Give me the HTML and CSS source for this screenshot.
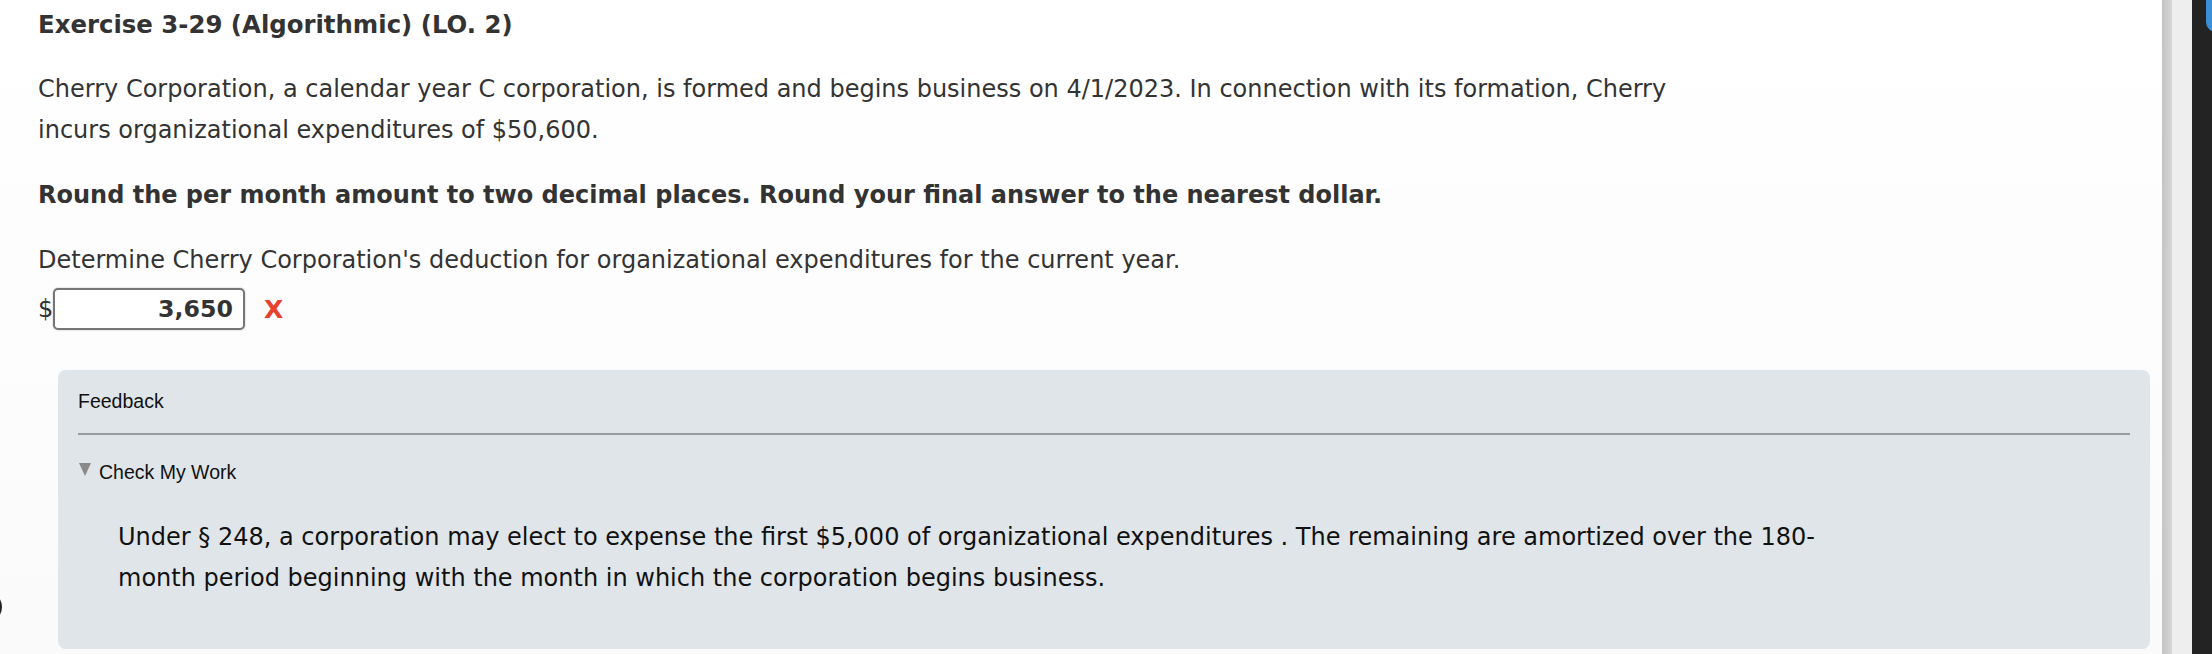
FILE: index.html
```html
<!DOCTYPE html>
<html lang="en">
<head>
<meta charset="utf-8">
<title>Exercise 3-29</title>
<link rel="stylesheet" href="styles.css">
</head>
<body>
<div class="frame">
  <main class="page">
    <h1 class="title">Exercise 3-29 (Algorithmic) (LO. 2)</h1>
    <p class="text intro">Cherry Corporation, a calendar year C corporation, is formed and begins business on 4/1/2023. In connection with its formation, Cherry incurs organizational expenditures of $50,600.</p>
    <p class="text strong">Round the per month amount to two decimal places. Round your final answer to the nearest dollar.</p>
    <p class="text ask">Determine Cherry Corporation's deduction for organizational expenditures for the current year.</p>
    <div class="answer">
      <span class="dollar">$</span>
      <span class="field">3,650</span>
      <span class="wrong">X</span>
    </div>
    <section class="feedback">
      <div class="fb-head">Feedback</div>
      <div class="fb-toggle"><span class="tri"></span>Check My Work</div>
      <p class="fb-text">Under § 248, a corporation may elect to expense the first $5,000 of organizational expenditures . The remaining are amortized over the 180-month period beginning with the month in which the corporation begins business.</p>
    </section>
    <div class="edge-mark"></div>
  </main>
  <div class="shade"></div>
  <div class="gutter"></div>
  <div class="dark"><span class="blue"></span></div>
</div>
</body>
</html>
```
FILE: styles.css
```css
html, body {
  margin: 0;
  padding: 0;
  height: 100%;
}
body {
  font-family: "DejaVu Sans", Verdana, sans-serif;
  color: #333;
  overflow: hidden;
}
.frame {
  display: flex;
  height: 654px;
}
.page {
  position: relative;
  flex: 1;
  background: linear-gradient(#ffffff, #fafafa);
  padding: 11px 0 0 38px;
  box-sizing: border-box;
  min-width: 0;
}
.title {
  margin: 0;
  font-size: 24.4px;
  line-height: 28px;
  font-weight: bold;
  color: #333;
}
.text {
  margin: 0;
  font-size: 24px;
  line-height: 41px;
  max-width: 1690px;
}
.intro { margin-top: 29.5px; }
.strong { font-weight: bold; margin-top: 24px; }
.ask { margin-top: 24px; }
.answer {
  display: flex;
  align-items: center;
  margin-top: 7.5px;
  height: 42px;
}
.dollar {
  font-size: 24px;
  width: 15px;
  overflow: visible;
}
.field {
  box-sizing: border-box;
  width: 192px;
  height: 42px;
  border: 2px solid #767676;
  border-radius: 5px;
  box-shadow: 0 0 2px rgba(0,0,0,0.25);
  background: #fff;
  text-align: right;
  padding-right: 10px;
  font-size: 23.7px;
  font-weight: bold;
  line-height: 38px;
  color: #333;
}
.wrong {
  margin-left: 19px;
  color: #e8412f;
  font-weight: bold;
  font-size: 25px;
  line-height: 1;
}
.feedback {
  margin: 40px 0 0 20px;
  width: 2092px;
  box-sizing: border-box;
  height: 279px;
  background: #dfe5e9;
  border-radius: 8px;
  padding: 19px 20px 0 20px;
  font-family: "Liberation Sans", Arial, sans-serif;
  color: #111;
}
.fb-head {
  font-size: 19.5px;
  line-height: 24px;
  padding-bottom: 20px;
  border-bottom: 2px solid #999c9f;
}
.fb-toggle {
  display: flex;
  align-items: center;
  margin-top: 25px;
  font-size: 19.5px;
  line-height: 24px;
}
.tri {
  width: 0;
  height: 0;
  border-left: 6px solid transparent;
  border-right: 6px solid transparent;
  border-top: 13px solid #8a8a8a;
  margin: -6px 8px 0 1px;
}
.fb-text {
  margin: 32.5px 0 0 40px;
  font-family: "DejaVu Sans", Verdana, sans-serif;
  font-size: 24px;
  line-height: 41px;
  max-width: 1760px;
  color: #111;
}
.edge-mark {
  position: absolute;
  left: -30px;
  top: 591px;
  width: 32px;
  height: 32px;
  border-right: 3px solid #222;
  border-radius: 50%;
  box-sizing: border-box;
}
.shade {
  width: 10px;
  flex: none;
  background: linear-gradient(to right, #c4c4c4, #d6d6d6);
}
.gutter {
  width: 20px;
  flex: none;
  background: #eeeeee;
}
.dark {
  position: relative;
  width: 20px;
  flex: none;
  background: #232323;
  overflow: hidden;
}
.blue {
  position: absolute;
  right: -14px;
  top: -20px;
  width: 20px;
  height: 52px;
  border-radius: 10px;
  background: #3a8fd6;
}
```
